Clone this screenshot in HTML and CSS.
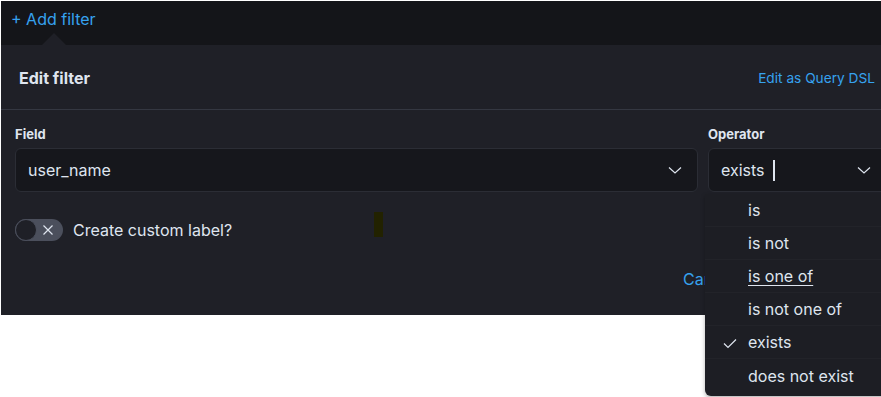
FILE: index.html
```html
<!DOCTYPE html>
<html>
<head>
<meta charset="utf-8">
<link rel="stylesheet" href="styles.css">
</head>
<body>
<div class="page">
  <div class="topbar">
    <span class="add-filter">+ Add filter</span>
    <span class="notch"></span>
  </div>
  <div class="panel">
    <div class="panel-header">
      <span class="title">Edit filter</span>
      <span class="link">Edit as Query DSL</span>
    </div>
    <div class="panel-body">
      <div class="row">
        <div class="col field-col">
          <div class="label">Field</div>
          <div class="input">
            <span class="value">user_name</span>
            <svg class="chev" width="16" height="16" viewBox="0 0 16 16"><path d="M2 5.5 L8 11 L14 5.5" fill="none" stroke="#dfe5ef" stroke-width="1.2"/></svg>
          </div>
        </div>
        <div class="col op-col">
          <div class="label">Operator</div>
          <div class="input">
            <span class="value">exists</span><span class="caret"></span>
            <svg class="chev" width="16" height="16" viewBox="0 0 16 16"><path d="M2 5.5 L8 11 L14 5.5" fill="none" stroke="#dfe5ef" stroke-width="1.2"/></svg>
          </div>
        </div>
      </div>
      <div class="switch-row">
        <span class="switch">
          <span class="knob"></span>
          <svg class="x" width="12" height="12" viewBox="0 0 12 12"><path d="M1.5 1.5 L10.5 10.5 M10.5 1.5 L1.5 10.5" stroke="#dfe5ef" stroke-width="1.2"/></svg>
        </span>
        <span class="switch-label">Create custom label?</span>
        <span class="mark"></span>
      </div>
      <div class="footer">
        <span class="cancel">Cancel</span>
      </div>
    </div>
  </div>
  <div class="dropdown">
    <div class="item">is</div>
    <div class="item">is not</div>
    <div class="item"><span class="u">is one of</span></div>
    <div class="item">is not one of</div>
    <div class="item"><svg class="check" width="16" height="16" viewBox="0 0 16 16"><path d="M2 8.5 L6 12.5 L14 4.5" fill="none" stroke="#dfe5ef" stroke-width="1.2"/></svg>exists</div>
    <div class="item">does not exist</div>
  </div>
</div>
</body>
</html>
```
FILE: styles.css
```css
html, body {
  margin: 0;
  padding: 0;
  background: #ffffff;
}
body {
  font-family: Inter, "Noto Sans", sans-serif;
  color: #dfe5ef;
  width: 881px;
  height: 397px;
  overflow: hidden;
}
.page {
  position: relative;
  margin: 1px 0 0 1px;
  width: 880px;
}
.topbar {
  position: relative;
  height: 44px;
  background: #141519;
  display: flex;
  align-items: center;
  padding-left: 10px;
}
.add-filter {
  color: #36a2ef;
  font-size: 16px;
  margin-top: -8px;
}
.notch {
  position: absolute;
  left: 41px;
  bottom: 0;
  width: 0;
  height: 0;
  border-left: 12px solid transparent;
  border-right: 12px solid transparent;
  border-bottom: 12px solid #1f2027;
}
.panel {
  background: #1f2027;
  height: 270px;
}
.panel-header {
  height: 64px;
  border-bottom: 1px solid #343741;
  display: flex;
  align-items: center;
  justify-content: space-between;
  padding: 0 6px 0 18px;
}
.title {
  font-size: 16px;
  font-weight: 700;
  color: #dfe5ef;
  margin-top: 2px;
}
.link {
  font-size: 13.7px;
  color: #36a2ef;
  margin-top: 2px;
}
.panel-body {
  padding: 16px 0 0 14px;
  overflow: hidden;
}
.row {
  display: flex;
  gap: 10px;
  width: 900px;
}
.field-col { width: 683px; }
.op-col { width: 179px; }
.label {
  font-size: 13px;
  font-weight: 700;
  color: #dfe5ef;
  height: 16px;
  line-height: 16px;
  margin-bottom: 6px;
}
.input {
  box-sizing: border-box;
  height: 44px;
  background: #16171c;
  border: 1px solid #2b2d35;
  border-radius: 6px;
  display: flex;
  align-items: center;
  padding: 0 14px 0 12px;
}
.value {
  font-size: 16px;
  color: #dfe5ef;
}
.caret {
  display: inline-block;
  width: 2px;
  height: 21px;
  background: #dfe5ef;
  margin-left: 8px;
}
.chev {
  margin-left: auto;
}
.switch-row {
  display: flex;
  align-items: center;
  margin-top: 26px;
  height: 24px;
}
.switch {
  position: relative;
  box-sizing: border-box;
  width: 48px;
  height: 22px;
  border-radius: 11px;
  background: #4b4f5c;
  display: flex;
  align-items: center;
  justify-content: flex-end;
  padding-right: 9px;
}
.knob {
  position: absolute;
  left: 0;
  top: 0;
  box-sizing: border-box;
  width: 22px;
  height: 22px;
  border-radius: 50%;
  background: #1f2027;
  border: 1px solid #4b4f5c;
}
.switch-label {
  font-size: 16px;
  margin-left: 10px;
  color: #dfe5ef;
}
.mark {
  align-self: flex-start;
  width: 9px;
  height: 25px;
  background: #222200;
  margin-left: 142px;
  margin-top: -6px;
}
.footer {
  margin-top: 27px;
  padding-left: 668px;
}
.cancel {
  font-size: 16px;
  color: #36a2ef;
}
.dropdown {
  position: absolute;
  left: 704px;
  top: 193px;
  width: 190px;
  height: 202px;
  background: #1d1e24;
  border-radius: 0 0 6px 6px;
  box-shadow: 0 2px 4px rgba(0,0,0,0.3);
}
.item {
  box-sizing: border-box;
  height: 33px;
  display: flex;
  align-items: center;
  padding-left: 43px;
  font-size: 16px;
  color: #dfe5ef;
  border-bottom: 1px solid #222329;
  position: relative;
}
.item:last-child { border-bottom: none; }
.u {
  text-decoration: underline;
  text-underline-offset: 3px;
}
.check {
  position: absolute;
  left: 17px;
  top: 9px;
}
```
